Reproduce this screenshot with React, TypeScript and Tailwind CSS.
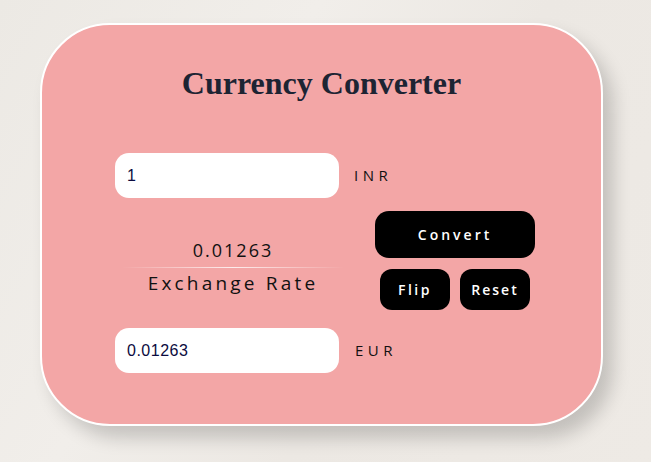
export default function App() {
  return (
    <div className="min-h-[462px] w-full overflow-hidden bg-[linear-gradient(120deg,#ece9e4_0%,#f1eeea_35%,#ece8e3_60%,#eeeae5_100%)] pt-[23px] font-['Open_Sans',sans-serif]">
      <div className="ml-[40px] h-[403px] w-[563px] rounded-[70px] border-2 border-white bg-[#f3a6a6] shadow-[10px_12px_18px_rgba(0,0,0,0.18)]">
        {/* Title */}
        <h1 className="mt-[38px] text-center font-['Liberation_Serif',serif] text-[32px] font-bold leading-[40px] text-[#1d2433]">
          Currency Converter
        </h1>

        <div className="mt-[50px] flex flex-col pl-[73px]">
          {/* From */}
          <div className="flex items-center gap-[15px]">
            <input
              type="text"
              defaultValue="1"
              className="h-[45px] w-[224px] rounded-[14px] bg-white px-[12px] font-['Liberation_Sans',sans-serif] text-[16px] text-[#0b0b40] outline-none"
            />
            <span className="text-[15px] tracking-[4.5px] text-[#111]">INR</span>
          </div>

          {/* Rate + actions */}
          <div className="mt-[13px] flex">
            <div className="ml-[5px] flex w-[226px] flex-col items-center pt-[27px]">
              <span className="text-[18px] leading-[24px] tracking-[2px] text-[#111]">0.01263</span>
              <div className="mt-[5px] h-px w-[222px] bg-[linear-gradient(90deg,rgba(255,255,255,0)_0%,rgba(255,255,255,0.8)_50%,rgba(255,255,255,0)_100%)]" />
              <span className="mt-[3px] text-[19px] leading-[24px] tracking-[3.2px] text-[#111]">Exchange Rate</span>
            </div>
            <div className="ml-[29px] flex flex-col">
              <button className="h-[47px] w-[160px] rounded-[14px] bg-black text-[14px] font-semibold tracking-[3px] text-white">
                Convert
              </button>
              <div className="ml-[5px] mt-[11px] flex gap-[10px]">
                <button className="h-[41px] w-[70px] rounded-[12px] bg-black text-[14px] font-semibold tracking-[2.5px] text-white">
                  Flip
                </button>
                <button className="h-[41px] w-[70px] rounded-[12px] bg-black text-[14px] font-semibold tracking-[2px] text-white">
                  Reset
                </button>
              </div>
            </div>
          </div>

          {/* To */}
          <div className="mt-[18px] flex items-center gap-[16px]">
            <input
              type="text"
              defaultValue="0.01263"
              className="h-[45px] w-[224px] rounded-[14px] bg-white px-[12px] font-['Liberation_Sans',sans-serif] text-[16px] tracking-[0.5px] text-[#0b0b40] outline-none"
            />
            <span className="text-[15px] tracking-[4.5px] text-[#111]">EUR</span>
          </div>
        </div>
      </div>
    </div>
  );
}
